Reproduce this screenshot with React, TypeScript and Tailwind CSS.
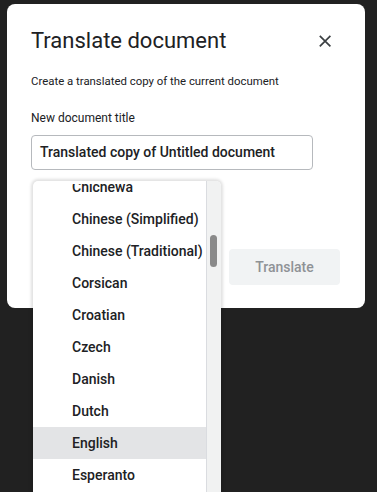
import React from "react";

const items = [
  "Chichewa",
  "Chinese (Simplified)",
  "Chinese (Traditional)",
  "Corsican",
  "Croatian",
  "Czech",
  "Danish",
  "Dutch",
  "English",
  "Esperanto",
  "Estonian",
];

export default function App() {
  return (
    <div
      className="relative h-[492px] w-[377px] overflow-hidden bg-[#212121] pl-[7px] pt-[4px]"
      style={{ fontFamily: "Roboto, 'Liberation Sans', Arial, sans-serif" }}
    >
      <div className="flex h-[304px] w-[358px] flex-col rounded-[8px] bg-white pl-[24px] pr-[25px] pt-[23px] pb-[23px]">
        <div className="flex items-center justify-between">
          <div className="text-[22px] leading-[28px] text-[#202124]">Translate document</div>
          <svg width="24" height="24" viewBox="0 0 24 24" className="mr-[3px]">
            <path d="M6.8 6.8 L17.4 17.4 M17.4 6.8 L6.8 17.4" stroke="#3c4043" strokeWidth="1.7" />
          </svg>
        </div>
        <div className="mt-[18px] whitespace-nowrap text-[11.4px] leading-[16px] text-[#202124]">
          Create a translated copy of the current document
        </div>
        <div className="mt-[21px] text-[12px] leading-[16px] text-[#202124]">New document title</div>
        <div className="mt-[9px] flex h-[35px] w-[282px] items-center whitespace-nowrap rounded-[4px] border border-[#b6b9bd] px-[8px] text-[14px] font-medium text-[#202124]">
          Translated copy of Untitled document
        </div>
        <div className="mt-auto flex justify-end">
          <div className="flex h-[36px] w-[111px] items-center justify-center rounded-[4px] bg-[#f1f3f4] text-[14px] font-medium text-[#8f9296]">
            Translate
          </div>
        </div>
      </div>

      <div className="absolute left-[33px] top-[181px] flex h-[330px] w-[188px] overflow-hidden rounded-t-[5px] bg-white shadow-[0_0_3px_2px_rgba(0,0,0,0.12)]">
        <div className="flex-1 pt-[3px]">
          <div className="h-full overflow-hidden">
            <div className="-mt-[13px]">
              {items.map((it) => (
                <div
                  key={it}
                  className={
                    "flex h-[32px] items-center whitespace-nowrap pl-[39px] text-[14px] font-medium text-[#202124] " +
                    (it === "English" ? "bg-[#e3e4e6]" : "")
                  }
                >
                  {it}
                </div>
              ))}
            </div>
          </div>
        </div>
        <div className="relative w-[15px] border-l border-[#dadce0] bg-[#f1f2f2]">
          <div className="absolute left-[3px] top-[54px] h-[32px] w-[7px] rounded-full bg-[#8a8a8a]" />
        </div>
      </div>
    </div>
  );
}
